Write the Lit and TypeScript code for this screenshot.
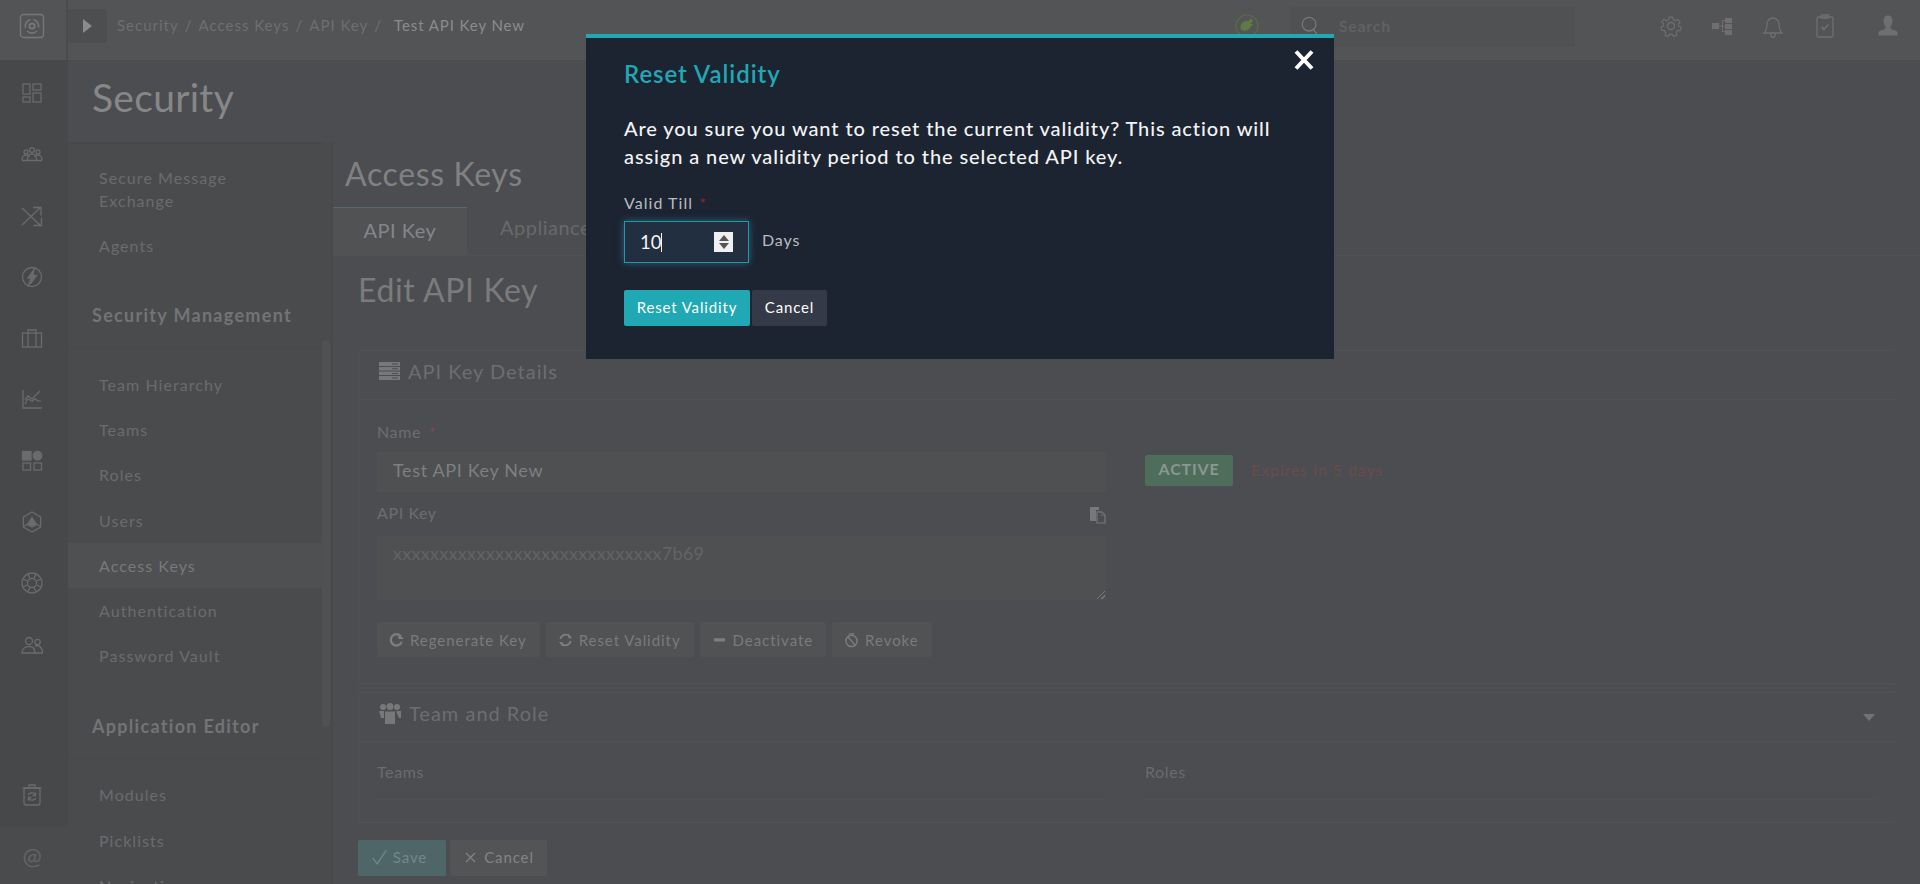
import { LitElement, html, css, svg } from 'lit';
import { customElement } from 'lit/decorators.js';

const railIcons = [
  svg`<rect x="3" y="3" width="7" height="10" /><rect x="13" y="3" width="8" height="6" /><rect x="3" y="16" width="7" height="5" /><rect x="13" y="12" width="8" height="9" />`,
  svg`<circle cx="12" cy="8" r="2.400" /><circle cx="6" cy="10" r="2" /><circle cx="18" cy="10" r="2" /><path d="M2 18c0-3 2-5 4-5s3 1 3 2M22 18c0-3-2-5-4-5s-3 1-3 2M7.500 18c0-4 2-6 4.500-6s4.500 2 4.500 6M2 18.500h20" />`,
  svg`<path d="M2 4l18 17M2 21L20 4M13 3.500h8v8M13.500 21.500h8v-8" />`,
  svg`<circle cx="12" cy="12" r="9.500" /><path d="M15 2l-7 20" /><path d="M13.500 5.500L8 13h3.500l-1 6 6-8.500h-3.500z" fill="currentColor" />`,
  svg`<rect x="2.500" y="7" width="19" height="14" /><path d="M8 21V4h8v17" />`,
  svg`<path d="M3 3v18h19M5 17c2-5 3-6 5-4 2 3 4-1 5-1s3 3 6 2M5 13l3-4 4 3 8-8" />`,
  svg`<rect x="2.500" y="2.500" width="8.500" height="8.500" fill="currentColor" /><circle cx="17.500" cy="6.700" r="4.300" fill="currentColor" /><rect x="3" y="14" width="7.500" height="7" /><rect x="14" y="14" width="7.500" height="7" />`,
  svg`<path d="M12 2l8.500 5c.3 3.500.3 6.500 0 10L12 22l-8.500-5c-.3-3.500-.3-6.500 0-10z" /><path d="M4 16l8-4 8 4" /><path d="M12 7.500l4.500 7-4.500 2.500-4.500-2.500z" fill="currentColor" />`,
  svg`<circle cx="12" cy="12" r="10" /><circle cx="12" cy="12" r="4.500" /><path d="M8 3l2 4.500M16 3l-2 4.500M8 21l2-4.500M16 21l-2-4.500M3 8l4.500 2M21 8l-4.500 2M3 16l4.500-2M21 16l-4.500-2" />`,
  svg`<circle cx="9" cy="8" r="3.500" /><circle cx="17.500" cy="9" r="2.700" /><path d="M2 20c0-4 3-6.500 7-6.500s6 2.500 6 6.500zM15 13c4-1 7.500 1 7.500 7H15" />`,
];

const trashIcon = svg`<rect x="4" y="5" width="16" height="17" rx="2" /><path d="M2.500 5h19M9 5V2h6v3M8 12c1-2 5-3 7-1l1 1M16 15c-1 2-5 3-7 1l-1-1M15.500 9.500v3h-3M8.500 17.500v-3h3" />`;

@customElement('app-root')
export class AppRoot extends LitElement {
  // the whole page behind the dialog is drawn in its dimmed colours
  static styles = css`
    :host {
      display: block;
      position: relative;
      height: 884px;
      overflow: hidden;
      font-family: Lato, 'Open Sans', sans-serif;
      background: #4c4d50;
      color: #7a7b7d;
    }

    svg { display: block; }

    /* top bar */
    .topbar {
      height: 60px;
      display: flex;
      align-items: center;
      background: #535456;
    }
    .logo {
      border-right: 2px solid #4a4b4d;
      display: flex;
      align-items: center;
      justify-content: center;
      padding: 0 2px 8px 0;
      height: 52px;
      width: 64px;
      color: #767778;
      flex: none;
    }
    .toggle {
      width: 39px;
      height: 34px;
      margin-top: -8px;
      background: #4d4e50;
      border-radius: 2px;
      display: flex;
      align-items: center;
      justify-content: center;
      flex: none;
    }
    .toggle i {
      display: block;
      border-left: 9px solid #8a8b8c;
      border-top: 7.500px solid transparent;
      border-bottom: 7.500px solid transparent;
    }
    .crumbs {
      margin: -10px 0 0 10px;
      display: flex;
      font-size: 15px;
      letter-spacing: 1px;
      color: #6e6f70;
      white-space: nowrap;
    }
    .crumbs span { margin-right: 6px; }
    .crumbs b { font-weight: 400; color: #8b8c8c; margin-left: 6px; letter-spacing: 0.900px; }
    .status {
      margin-left: auto;
      width: 24px;
      height: 24px;
      margin-right: 31px;
      margin-top: -8px;
    }
    .search {
      width: 285px;
      height: 40px;
      margin-top: -6px;
      background: #505153;
      display: flex;
      align-items: center;
      box-sizing: border-box;
      padding-left: 10px;
      gap: 19px;
      color: #606163;
      font-size: 16px;
      font-weight: 700;
      letter-spacing: 0.7px;
      flex: none;
    }
    .search span { margin-top: -3px; }
    .search svg { margin-top: -2px; }
    .tools {
      display: flex;
      align-items: center;
      margin: -8px 20px 0 84px;
      color: #6e6f70;
    }
    .tools svg { width: 24px; height: 24px; margin-right: 27.300px; }
    .tools svg:last-child { margin: 0 0 0 12px; }

    .body { display: flex; height: 824px; }

    /* icon rail */
    .rail {
      width: 68px;
      flex: none;
      background: #47484a;
      display: flex;
      flex-direction: column;
      align-items: center;
      color: #6a6b6c;
    }
    .rail-top {
      flex: 1;
      display: flex;
      flex-direction: column;
      gap: 37.300px;
      padding-top: 21px;
      margin-left: -4px;
    }
    .rail svg { width: 24px; height: 24px; }
    .rail-trash { margin: 0 0 20px -4px; }
    .rail-foot {
      align-self: stretch;
      height: 57px;
      background: #4a4b4d;
      display: flex;
      align-items: center;
      justify-content: center;
      padding-right: 4px;
      font-size: 23px;
      color: #646567;
    }

    .page { flex: 1; min-width: 0; display: flex; flex-direction: column; }
    .page-title {
      height: 82px;
      flex: none;
      box-sizing: border-box;
      padding: 13px 0 0 24px;
      font-size: 39px;
      line-height: 48px;
      letter-spacing: 0.3px;
      color: #868787;
    }
    .columns { flex: 1; display: flex; min-height: 0; }

    /* section navigation */
    .subnav {
      position: relative;
      width: 263px;
      flex: none;
      border-right: 2px solid #48494b;
      background: #4a4b4d;
      overflow: hidden;
    }
    .subnav-list {
      width: 254px;
      border-top: 2px solid #47484a;
      box-sizing: border-box;
      padding-top: 10.600px;
    }
    .scrollbar {
      position: absolute;
      left: 254px;
      top: 198px;
      width: 8px;
      height: 387px;
      border-radius: 4px;
      background: #505153;
    }
    .nav-item {
      height: 45.330px;
      line-height: 45.330px;
      padding-left: 31px;
      font-size: 16px;
      letter-spacing: 1.050px;
      color: #6a6b6d;
    }
    .nav-item.two { line-height: 23px; height: 68px; padding-top: 11px; box-sizing: border-box; }
    .nav-item.active { background: #4f5052; color: #78797a; }
    .nav-head {
      margin-top: 35px;
      padding: 0 0 20px 24px;
      font-size: 18px;
      line-height: 24px;
      font-weight: 700;
      letter-spacing: 1.300px;
      color: #737476;
      border-bottom: 1px solid #47484a;
      margin-bottom: 13.600px;
    }

    /* main column */
    .main { flex: 1; min-width: 0; display: flex; flex-direction: column; margin-top: -82px; padding-top: 82px; }
    .main-scroll { flex: 1; min-height: 0; overflow: hidden; }
    .main-title {
      font-size: 32px;
      line-height: 40px;
      letter-spacing: 0.650px;
      color: #808182;
      padding: 12px 0 0 12px;
      height: 53px;
    }
    .tabs {
      display: flex;
      height: 48px;
      border-bottom: 1px solid #505153;
    }
    .tab {
      width: 134px;
      text-align: center;
      line-height: 45px;
      font-size: 20px;
      letter-spacing: 0.500px;
      color: #85868a;
      background: #515254;
      border-top: 1px solid #4c6c6f;
    }
    .tab.off { width: auto; padding: 0 33px; color: #68696b; background: none; border: 0; line-height: 40px; }
    .edit-title {
      font-size: 32px;
      line-height: 38px;
      letter-spacing: 0.600px;
      padding: 15px 0 0 25px;
      height: 38px;
      margin-bottom: 41px;
      color: #7a7b7d;
    }
    .card {
      margin: 0 25px;
      border: 1px solid #505153;
      border-right: 0;
    }
    .card + .card { margin-top: 8px; }
    .card-head {
      height: 49px;
      display: flex;
      align-items: center;
      gap: 8px;
      padding: 0 0 8px 20px;
      box-sizing: border-box;
      font-size: 20px;
      letter-spacing: 1px;
      color: #6c6d6f;
      border-bottom: 1px solid #505153;
      position: relative;
    }
    .caret {
      position: absolute;
      right: 20px;
      top: 21px;
      border-top: 7px solid #717274;
      border-left: 6.500px solid transparent;
      border-right: 6.500px solid transparent;
    }
    .card-body { padding: 20px 18px 0; height: 283px; box-sizing: border-box; position: relative; }
    .field-label { font-size: 16px; letter-spacing: 0.6px; line-height: 24px; color: #6c6d6f; }
    .field-label em { font-style: normal; color: #7a4a4c; margin-left: 3px; }
    .name-row { display: flex; align-items: center; margin-top: 8px; }
    .input {
      width: 729px;
      height: 40px;
      line-height: 37px;
      box-sizing: border-box;
      padding-left: 16px;
      background: #4f5052;
      font-size: 18px;
      letter-spacing: 0.650px;
      color: #7e7f81;
      flex: none;
    }
    .badge {
      margin: -3px 0 0 39px;
      width: 88px;
      height: 31px;
      border-radius: 2px;
      background: #4e6d5b;
      color: #8a9890;
      text-align: center;
      line-height: 28px;
      font-size: 16px;
      font-weight: 700;
      letter-spacing: 0.800px;
    }
    .expires { margin: -5.500px 0 0 18px; font-size: 16px; letter-spacing: 0.900px; color: #6b4b4c; }
    .key-label { display: flex; justify-content: space-between; width: 729px; margin-top: 9px; align-items: center; }
    .key-label svg { margin-top: 5px; }
    .area {
      width: 729px;
      height: 64px;
      margin-top: 11px;
      box-sizing: border-box;
      padding-left: 16px;
      line-height: 35px;
      background: #4f5052;
      font-size: 18px;
      letter-spacing: 0.300px;
      color: #636466;
      position: relative;
    }
    .area::after {
      content: '';
      position: absolute;
      right: 1px;
      bottom: 1px;
      width: 8px;
      height: 8px;
      background: linear-gradient(135deg, transparent 45%, #77787a 45%, #77787a 55%, transparent 55%, transparent 72%, #77787a 72%, #77787a 82%, transparent 82%);
    }
    .actions { display: flex; gap: 6px; margin-top: 22px; }
    .action {
      height: 35px;
      display: flex;
      align-items: center;
      gap: 6px;
      padding: 0 13px 0 12px;
      box-sizing: border-box;
      background: #515254;
      border-radius: 2px;
      font-size: 15px;
      letter-spacing: 0.950px;
      color: #7a7b7d;
      white-space: nowrap;
    }
    .action svg { width: 15px; height: 16px; }
    .team-grid { display: flex; padding: 18px 18px 0; height: 80px; box-sizing: border-box; font-size: 16px; letter-spacing: 0.6px; color: #6a6b6d; }
    .team-grid div { height: 39px; line-height: 24px; border-bottom: 1px solid #4f5052; }
    .team-grid div:first-child { width: 729px; margin-right: 39px; }
    .team-grid div:last-child { flex: 1; }

    .footer {
      height: 57px;
      flex: none;
      display: flex;
      gap: 4px;
      padding: 12px 0 0 25px;
      box-sizing: border-box;
      border-top: 1px solid #4b4c4e;
      background: #4c4d50;
    }
    .foot-btn {
      height: 36px;
      box-sizing: border-box;
      padding-bottom: 2px;
      display: flex;
      align-items: center;
      justify-content: center;
      border-radius: 2px;
      font-size: 15px;
      letter-spacing: 0.900px;
    }
    .foot-btn.save { width: 88px; gap: 5px; padding-right: 6px; background: #4f6668; color: #738788; }
    .foot-btn.cancel { width: 97px; gap: 8px; padding-left: 2px; background: #535456; color: #838486; }

    /* dialog */
    .modal {
      position: absolute;
      left: 586px;
      top: 34px;
      width: 748px;
      height: 325px;
      box-sizing: border-box;
      background: #1c2431;
      border-top: 4px solid #20a8b4;
      padding: 19px 38px 0;
      color: #f2f3f4;
    }
    .modal h2 {
      margin: 0;
      font-size: 24px;
      line-height: 34px;
      font-weight: 600;
      letter-spacing: 0.950px;
      color: #20a8b4;
    }
    .close {
      position: absolute;
      right: 20px;
      top: 12px;
      width: 20px;
      height: 20px;
      color: #fff;
    }
    .modal p {
      margin: 24px 0 0;
      font-size: 20px;
      line-height: 27.500px;
      font-weight: 500;
      letter-spacing: 0.900px;
    }
    .modal label {
      display: block;
      margin-top: 22px;
      font-size: 16px;
      line-height: 22px;
      letter-spacing: 1.050px;
      color: #b9bcc0;
    }
    .modal label em { font-style: normal; color: #8d2a33; margin-left: 1px; }
    .days-row { display: flex; align-items: center; margin-top: 7px; gap: 13px; }
    .number {
      width: 125px;
      height: 42px;
      box-sizing: border-box;
      border: 1px solid #1f9aa6;
      box-shadow: 0 0 7px rgba(50, 150, 190, 0.55);
      background: #212f40;
      display: flex;
      align-items: center;
      padding: 0 15px;
      font-size: 18.500px;
      color: #f4f5f6;
    }
    .number span { border-right: 1px solid #f4f5f6; line-height: 19px; }
    .spin {
      margin-left: auto;
      width: 19px;
      height: 20px;
      background: #f0f0f0;
      display: flex;
      flex-direction: column;
      align-items: center;
      justify-content: center;
      gap: 2px;
    }
    .spin i { display: block; border-left: 5px solid transparent; border-right: 5px solid transparent; }
    .spin i:first-child { border-bottom: 6px solid #555; }
    .spin i:last-child { border-top: 6px solid #555; }
    .days { font-size: 16px; letter-spacing: 0.9px; color: #b9bcc0; margin-top: -5px; }
    .modal-actions { display: flex; gap: 2px; margin-top: 27px; }
    .modal-actions div {
      height: 36px;
      line-height: 34px;
      text-align: center;
      border-radius: 2px;
      font-size: 15px;
      letter-spacing: 0.850px;
      color: #fff;
    }
    .primary { width: 126px; background: #20a8b4; }
    .secondary { width: 75px; background: #343a48; }
  `;

  private railIcon(body: unknown) {
    return html`<svg viewBox="0 0 24 24" fill="none" stroke="currentColor" stroke-width="1.300">${body}</svg>`;
  }

  private renderTopbar() {
    return html`
      <div class="topbar">
        <div class="logo">
          <svg width="26" height="26" viewBox="0 0 26 26" fill="none" stroke="currentColor" stroke-width="1.300">
            <rect x="1.500" y="1.500" width="23" height="23" rx="3" />
            <circle cx="13" cy="13" r="2.600" stroke-width="2" />
            <path d="M6.500 15a7 7 0 0 1 5-8.500M14.500 6.500a7 7 0 0 1 5 8M18 18a7 7 0 0 1-10 0" stroke-width="1.600" />
          </svg>
        </div>
        <div class="toggle"><i></i></div>
        <div class="crumbs">
          <span>Security</span><span>/</span><span>Access Keys</span><span>/</span><span>API Key</span><span>/</span>
          <b>Test API Key New</b>
        </div>
        <svg class="status" viewBox="0 0 24 24" fill="none">
          <circle cx="12" cy="12" r="11" stroke="#5a6a48" stroke-width="1.200" />
          <path d="M5.500 13.500c0-4 3.500-7.500 7.500-6.500l3.500-2.500 1.500 2.500-2.500 2.500 2.500 1-2.500 2.500c-1.500 5-10 5-10 .500z" fill="#5f7a46" />
        </svg>
        <div class="search">
          <svg width="20" height="24" viewBox="0 0 22 24" fill="none" stroke="#77787a" stroke-width="1.400">
            <circle cx="10" cy="10" r="7.500" /><path d="M15 16l3.500 5" />
          </svg>
          <span>Search</span>
        </div>
        <div class="tools">
          <svg viewBox="0 0 24 24" fill="none" stroke="currentColor" stroke-width="1.300">
            <circle cx="12" cy="12" r="3.500" />
            <path d="M10 2h4l.7 3 2.600 1.100 2.700-1.600 2.400 3-2 2.300.4 2.200 2.600 1.500-1 3.700-3 .1-1.500 2.200.8 3-3.500 1.500-1.800-2.500h-2.800L8.800 24l-3.500-1.500.8-3-1.500-2.200-3-.1-1-3.700 2.600-1.500.4-2.200-2-2.300 2.400-3 2.700 1.600L9.300 5z" transform="translate(1.400 1.400) scale(.88)" />
          </svg>
          <svg viewBox="0 0 24 24" fill="currentColor" stroke="none">
            <path d="M9 11.500h6v1H9zM12 6h3v1h-2v10h2v1h-3z" fill="#7a6767" />
            <rect x="2" y="9" width="7" height="6" /><rect x="15" y="4" width="7" height="5" /><rect x="15" y="10" width="7" height="5" /><rect x="15" y="16" width="7" height="5" />
          </svg>
          <svg viewBox="0 0 24 24" fill="none" stroke="currentColor" stroke-width="1.300">
            <path d="M3 19c2-2 3-4 3-9a6 6 0 0 1 12 0c0 5 1 7 3 9zM10 19v2.500a2 2 0 0 0 4 0V19" />
          </svg>
          <svg viewBox="0 0 24 24" fill="none" stroke="currentColor" stroke-width="1.300">
            <rect x="4" y="3" width="16" height="20" rx="1.500" /><rect x="8" y="1" width="8" height="3" rx="1" />
            <path d="M8.500 13l2.500 2.500 4.500-5" stroke-width="1.800" />
          </svg>
          <svg viewBox="0 0 24 24" fill="currentColor">
            <path d="M12 1.500c3 0 4.500 2 4.500 5.500 0 2.500-1 4.500-2 5.500v2c0 1 5.500 1.500 7 3.500v3.500h-19V18c1.500-2 7-2.500 7-3.500v-2c-1-1-2-3-2-5.500 0-3.500 1.500-5.500 4.500-5.500z" />
          </svg>
        </div>
      </div>
    `;
  }

  private renderSubnav() {
    const item = (name: string, active = false) =>
      html`<div class="nav-item ${active ? 'active' : ''}">${name}</div>`;
    return html`
      <div class="subnav">
        <div class="subnav-list">
          <div class="nav-item two">Secure Message<br />Exchange</div>
          ${item('Agents')}
          <div class="nav-head">Security Management</div>
          ${item('Team Hierarchy')}${item('Teams')}${item('Roles')}${item('Users')}
          ${item('Access Keys', true)}${item('Authentication')}${item('Password Vault')}
          <div class="nav-head">Application Editor</div>
          ${item('Modules')}${item('Picklists')}${item('Navigation')}
        </div>
        <div class="scrollbar"></div>
      </div>
    `;
  }

  private renderKeyCard() {
    const actions: [string, unknown][] = [
      ['Regenerate Key', svg`<path d="M12.500 4a6 6 0 1 0 1 6" stroke-width="2.400" fill="none" /><path d="M10 1v6h6z" />`],
      ['Reset Validity', svg`<path d="M2.500 7a6 6 0 0 1 10-3M13.500 9a6 6 0 0 1-10 3" stroke-width="2" fill="none" /><path d="M11 1v5h4zM5 15v-5H1z" />`],
      ['Deactivate', svg`<rect x="2" y="6" width="12" height="3.500" rx="1" />`],
      ['Revoke', svg`<circle cx="8" cy="9" r="6" stroke-width="1.500" fill="none" /><path d="M4 4.500l8 9M5 1.500h6" stroke-width="1.500" fill="none" />`],
    ];
    return html`
      <div class="card">
        <div class="card-head">
          <svg width="21" height="18" viewBox="0 0 21 18" fill="#77787a">
            <path d="M0 0h21v4H0zM0 5h21v3.500H0zM0 9.500h21V13H0zM0 14h21v4H0z" />
            <path d="M13 1.500h6v1h-6zM13 6.300h6v1h-6zM13 11h6v1h-6zM13 15.500h6v1h-6z" fill="#4c4d50" />
          </svg>
          API Key Details
        </div>
        <div class="card-body">
          <div class="field-label">Name <em>*</em></div>
          <div class="name-row">
            <div class="input">Test API Key New</div>
            <div class="badge">ACTIVE</div>
            <div class="expires">Expires in 5 days</div>
          </div>
          <div class="key-label">
            <div class="field-label">API Key</div>
            <svg width="17" height="17" viewBox="0 0 17 17">
              <path d="M1 0h9v3H7v11H1z" fill="#77787a" /><path d="M8 5h5l3 3v8H8z" fill="none" stroke="#77787a" stroke-width="1.200" /><path d="M8 4h4v5h4" fill="#77787a" opacity=".5" />
            </svg>
          </div>
          <div class="area">xxxxxxxxxxxxxxxxxxxxxxxxxxxxx7b69</div>
          <div class="actions">
            ${actions.map(
              ([label, icon]) => html`
                <div class="action">
                  <svg viewBox="0 0 16 16" fill="#7d7e80" stroke="#7d7e80" stroke-width="0">${icon}</svg>
                  ${label}
                </div>
              `
            )}
          </div>
        </div>
      </div>
    `;
  }

  private renderMain() {
    return html`
      <div class="main">
        <div class="main-scroll">
          <div class="main-title">Access Keys</div>
          <div class="tabs">
            <div class="tab">API Key</div>
            <div class="tab off">Appliances</div>
          </div>
          <div class="edit-title">Edit API Key</div>
          ${this.renderKeyCard()}
          <div class="card">
            <div class="card-head">
              <svg width="22" height="22" viewBox="0 0 22 22" fill="#77787a">
                <circle cx="4" cy="5" r="3" /><circle cx="18" cy="5" r="3" /><circle cx="11" cy="4.500" r="3.500" />
                <path d="M0 9h5v7H2zM17 9h5v7h-2zM6 9.500h10V22H6z" />
              </svg>
              Team and Role
              <span class="caret"></span>
            </div>
            <div class="team-grid">
              <div>Teams</div>
              <div>Roles</div>
            </div>
          </div>
        </div>
        <div class="footer">
          <div class="foot-btn save">
            <svg width="17" height="16" viewBox="0 0 14 14" fill="none" stroke="#738788" stroke-width="1.100"><path d="M1 8l4 5 8-12" /></svg>
            Save
          </div>
          <div class="foot-btn cancel">
            <svg width="11" height="11" viewBox="0 0 11 11" fill="none" stroke="#838486" stroke-width="1.200"><path d="M1 1l9 9M10 1l-9 9" /></svg>
            Cancel
          </div>
        </div>
      </div>
    `;
  }

  private renderModal() {
    return html`
      <div class="modal">
        <svg class="close" viewBox="0 0 20 20" fill="none" stroke="currentColor" stroke-width="4"><path d="M2 1.500l16 17M18 1.500l-16 17" /></svg>
        <h2>Reset Validity</h2>
        <p>Are you sure you want to reset the current validity? This action will assign a new validity period to the selected API key.</p>
        <label>Valid Till <em>*</em></label>
        <div class="days-row">
          <div class="number">
            <span>10</span>
            <div class="spin"><i></i><i></i></div>
          </div>
          <div class="days">Days</div>
        </div>
        <div class="modal-actions">
          <div class="primary">Reset Validity</div>
          <div class="secondary">Cancel</div>
        </div>
      </div>
    `;
  }

  render() {
    return html`
      ${this.renderTopbar()}
      <div class="body">
        <div class="rail">
          <div class="rail-top">${railIcons.map((i) => this.railIcon(i))}</div>
          <div class="rail-trash">${this.railIcon(trashIcon)}</div>
          <div class="rail-foot">@</div>
        </div>
        <div class="page">
          <div class="page-title">Security</div>
          <div class="columns">
            ${this.renderSubnav()}
            ${this.renderMain()}
          </div>
        </div>
      </div>
      ${this.renderModal()}
    `;
  }
}

declare global {
  interface HTMLElementTagNameMap {
    'app-root': AppRoot;
  }
}
